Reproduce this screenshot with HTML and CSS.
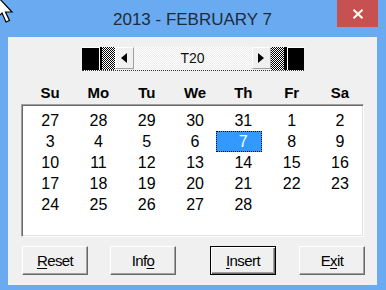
FILE: index.html
```html
<!DOCTYPE html>
<html lang="en">
<head>
    <meta charset="UTF-8">
    <title>Calendar</title>
    <link rel="stylesheet" href="styles.css">
</head>
<body>
    <div class="window">
        <!-- mouse pointer sitting over the corner -->
        <svg class="cursor" width="16" height="26" viewBox="0 0 16 26">
            <polygon points="-3,-4 -3,18 2,13 6,22 9.5,20.5 5.5,12 12,12" fill="#fff" stroke="#000" stroke-width="1.2"/>
        </svg>

        <div class="titlebar">
            <div class="title">2013 - FEBRUARY 7</div>
            <div class="close">
                <svg width="12" height="10" viewBox="0 0 12 10">
                    <path d="M1.5 0.8 L10.5 9.2 M10.5 0.8 L1.5 9.2" stroke="#fff" stroke-width="2"/>
                </svg>
            </div>
        </div>

        <div class="client">
            <div class="scroller">
                <div class="sb-end left"><span></span></div>
                <div class="sb-dither"></div>
                <div class="sb-btn">
                    <svg width="6" height="10" viewBox="0 0 6 10"><polygon points="6,0 6,10 0,5" fill="#000"/></svg>
                </div>
                <div class="sb-track">T20</div>
                <div class="sb-btn">
                    <svg width="6" height="10" viewBox="0 0 6 10"><polygon points="0,0 0,10 6,5" fill="#000"/></svg>
                </div>
                <div class="sb-dither"></div>
                <div class="sb-end right"><span></span></div>
            </div>

            <div class="weekdays">
                <span>Su</span><span>Mo</span><span>Tu</span><span>We</span><span>Th</span><span>Fr</span><span>Sa</span>
            </div>

            <div class="month">
                <div class="days">
                    <span>27</span><span>28</span><span>29</span><span>30</span><span>31</span><span>1</span><span>2</span>
                    <span>3</span><span>4</span><span>5</span><span>6</span><span><b class="sel">7</b></span><span>8</span><span>9</span>
                    <span>10</span><span>11</span><span>12</span><span>13</span><span>14</span><span>15</span><span>16</span>
                    <span>17</span><span>18</span><span>19</span><span>20</span><span>21</span><span>22</span><span>23</span>
                    <span>24</span><span>25</span><span>26</span><span>27</span><span>28</span>
                </div>
            </div>

            <div class="buttons">
                <button class="btn reset"><u>R</u>eset</button>
                <button class="btn info">Inf<u>o</u></button>
                <button class="btn insert default"><u>I</u>nsert</button>
                <button class="btn exit">E<u>x</u>it</button>
            </div>
        </div>
    </div>
</body>
</html>
```

FILE: styles.css
```css
* {
    box-sizing: border-box;
}

body {
    margin: 0;
    padding: 0;
    background: #6aaaf0;
    font-family: "Liberation Sans", Arial, sans-serif;
}

.window {
    position: relative;
    width: 386px;
    height: 290px;
    background: #6aaaf0;
    overflow: hidden;
}

.cursor {
    position: absolute;
    left: 0;
    top: 0;
}

/* title bar */
.titlebar {
    display: flex;
    height: 37px;
}

.title {
    flex: 1;
    padding-left: 48px;
    text-align: center;
    font-size: 17px;
    line-height: 40px;
    color: #1e2b3a;
}

.close {
    width: 41px;
    height: 27px;
    margin-right: 8px;
    background: #c75050;
    display: flex;
    justify-content: center;
    align-items: center;
}

/* client area */
.client {
    height: 248px;
    margin: 0 9px 0 8px;
    background: #f0f0f0;
    padding-top: 10px;
}

/* year / month scroller */
.scroller {
    display: flex;
    width: 222px;
    height: 24px;
    margin: 0 auto;
    border-bottom: 1px dotted #333;
}

.sb-end {
    width: 20px;
    background: #000;
}

.sb-end span {
    display: block;
    width: 18px;
    height: 100%;
    border-top: 1px solid #fff;
}

.sb-end.left span {
    border-right: 1px solid #fff;
}

.sb-end.right span {
    margin-left: 3px;
    border-left: 1px solid #fff;
}

.sb-dither {
    width: 13px;
    background: repeating-conic-gradient(#000 0 25%, #fff 0 50%) 0 0 / 2px 2px;
}

.sb-btn {
    width: 19px;
    height: 22px;
    background: #f0f0f0;
    border-top: 1px solid #fff;
    border-left: 1px solid #fff;
    border-right: 1px solid #a0a0a0;
    border-bottom: 1px solid #a0a0a0;
    display: flex;
    justify-content: center;
    align-items: center;
}

.sb-track {
    flex: 1;
    text-align: center;
    font-size: 14px;
    line-height: 23px;
    color: #111;
    background: repeating-conic-gradient(#fff 0 25%, #ececec 0 50%) 0 0 / 2px 2px;
}

/* weekday headers */
.weekdays {
    display: grid;
    grid-template-columns: repeat(7, 48.3px);
    margin: 12px 0 1px 18px;
    font-size: 15px;
    font-weight: bold;
    line-height: 20px;
    text-align: center;
    color: #000;
}

/* the month box */
.month {
    width: 343px;
    height: 133px;
    margin-left: 13px;
    background: #fff;
    border-top: 1px solid #a0a0a0;
    border-left: 1px solid #a0a0a0;
    border-right: 1px solid #fff;
    border-bottom: 1px solid #fff;
    box-shadow: inset 1px 1px 0 #696969, inset -1px -1px 0 #e3e3e3;
    padding: 5px 0 0 4px;
}

.days {
    display: grid;
    grid-template-columns: repeat(7, 48.3px);
    grid-auto-rows: 21px;
    font-size: 16px;
    line-height: 21px;
    text-align: center;
    color: #000;
}

.sel {
    display: block;
    width: 46px;
    height: 21px;
    margin-left: -3px;
    padding-left: 8px;
    font-weight: normal;
    line-height: 19px;
    color: #fff;
    background: #3399ff;
    border: 1px dotted #000;
}

/* buttons */
.buttons {
    display: flex;
    margin-top: 9px;
}

.btn {
    width: 66px;
    height: 29px;
    padding: 0;
    font-family: "Liberation Sans", Arial, sans-serif;
    font-size: 15px;
    letter-spacing: -0.6px;
    color: #000;
    background: #f0f0f0;
    border-top: 1px solid #fff;
    border-left: 1px solid #fff;
    border-right: 1px solid #696969;
    border-bottom: 1px solid #696969;
    box-shadow: inset -1px -1px 0 #a0a0a0;
}

.btn u {
    text-underline-offset: 2px;
}

.btn.reset {
    margin-left: 14px;
}

.btn.info {
    margin-left: 22px;
}

.btn.insert {
    margin-left: 34px;
}

.btn.exit {
    margin-left: 23px;
}

.btn.default {
    border: 1px solid #000;
    box-shadow: inset 1px 1px 0 #fff, inset -1px -1px 0 #696969, inset -2px -2px 0 #a0a0a0;
}
```
